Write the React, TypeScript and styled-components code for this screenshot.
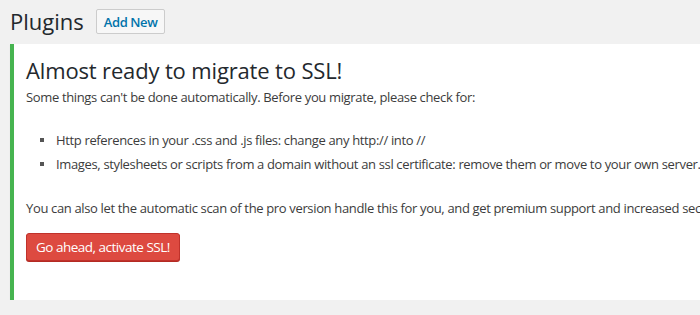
import React from "react";
import styled, { createGlobalStyle } from "styled-components";

const Global = createGlobalStyle`
  html, body { margin: 0; padding: 0; background: #f1f1f1; overflow: hidden; }
  body { font-family: "Open Sans", "Noto Sans", sans-serif; color: #444; font-size: 13px; }
`;

const Wrap = styled.div`
  width: 1000px;
  padding: 9px 0 0 10px;
`;

const Header = styled.div`
  display: flex;
  align-items: center;
  height: 25px;
`;

const Title = styled.h1`
  margin: 0;
  font-size: 22px;
  font-weight: 400;
  color: #23282d;
  line-height: 25px;
`;

const AddNew = styled.a`
  margin-left: 12px;
  box-sizing: border-box;
  height: 25px;
  padding: 0 7px;
  display: inline-flex;
  align-items: center;
  border: 1px solid #ccc;
  border-radius: 2px;
  background: #f7f7f7;
  color: #0073aa;
  font-size: 13px;
  font-weight: 600;
  text-decoration: none;
  letter-spacing: -0.4px;
`;

const Notice = styled.div`
  margin-top: 10px;
  background: #fff;
  border-left: 4px solid #46b450;
  box-shadow: 0 1px 1px rgba(0, 0, 0, 0.08);
  padding: 11px 12px 37px 12px;
  height: 256px;
  box-sizing: border-box;
`;

const Heading = styled.h2`
  margin: 0;
  font-size: 22px;
  font-weight: 400;
  color: #23282d;
  line-height: 30px;
  letter-spacing: -0.15px;
`;

const Text = styled.p<{ $top?: number }>`
  margin: ${(p) => p.$top ?? 0}px 0 0 0;
  font-size: 13px;
  line-height: 20px;
  letter-spacing: -0.35px;
  color: #3c3c3c;
`;

const List = styled.ul`
  margin: 23px 0 0 0;
  padding: 0 0 0 30px;
  list-style: none;
  display: flex;
  flex-direction: column;
  gap: 4px;
`;

const Item = styled.li`
  position: relative;
  font-size: 13px;
  line-height: 20px;
  letter-spacing: -0.35px;
  color: #3c3c3c;
  &::before {
    content: "";
    position: absolute;
    left: -16px;
    top: 8px;
    width: 4px;
    height: 4px;
    background: #555;
  }
`;

const Activate = styled.button`
  margin-top: 15px;
  box-sizing: border-box;
  height: 28px;
  padding: 0 9px;
  border: 1px solid #c0322b;
  border-radius: 3px;
  background: #dd4a40;
  color: #fff;
  font-family: inherit;
  font-size: 13.5px;
  letter-spacing: -0.5px;
  box-shadow: 0 1px 0 #b42a23;
  cursor: pointer;
`;

export default function App() {
  return (
    <>
      <Global />
      <Wrap>
        <Header>
          <Title>Plugins</Title>
          <AddNew href="#">Add New</AddNew>
        </Header>
        <Notice>
          <Heading>Almost ready to migrate to SSL!</Heading>
          <Text $top={2}>
            Some things can't be done automatically. Before you migrate, please check for:
          </Text>
          <List>
            <Item>Http references in your .css and .js files: change any http:// into //</Item>
            <Item>
              Images, stylesheets or scripts from a domain without an ssl certificate: remove them or move to your own server.
            </Item>
          </List>
          <Text $top={24}>
            You can also let the automatic scan of the pro version handle this for you, and get premium support and increased security with HSTS.
          </Text>
          <Activate>Go ahead, activate SSL!</Activate>
        </Notice>
      </Wrap>
    </>
  );
}
